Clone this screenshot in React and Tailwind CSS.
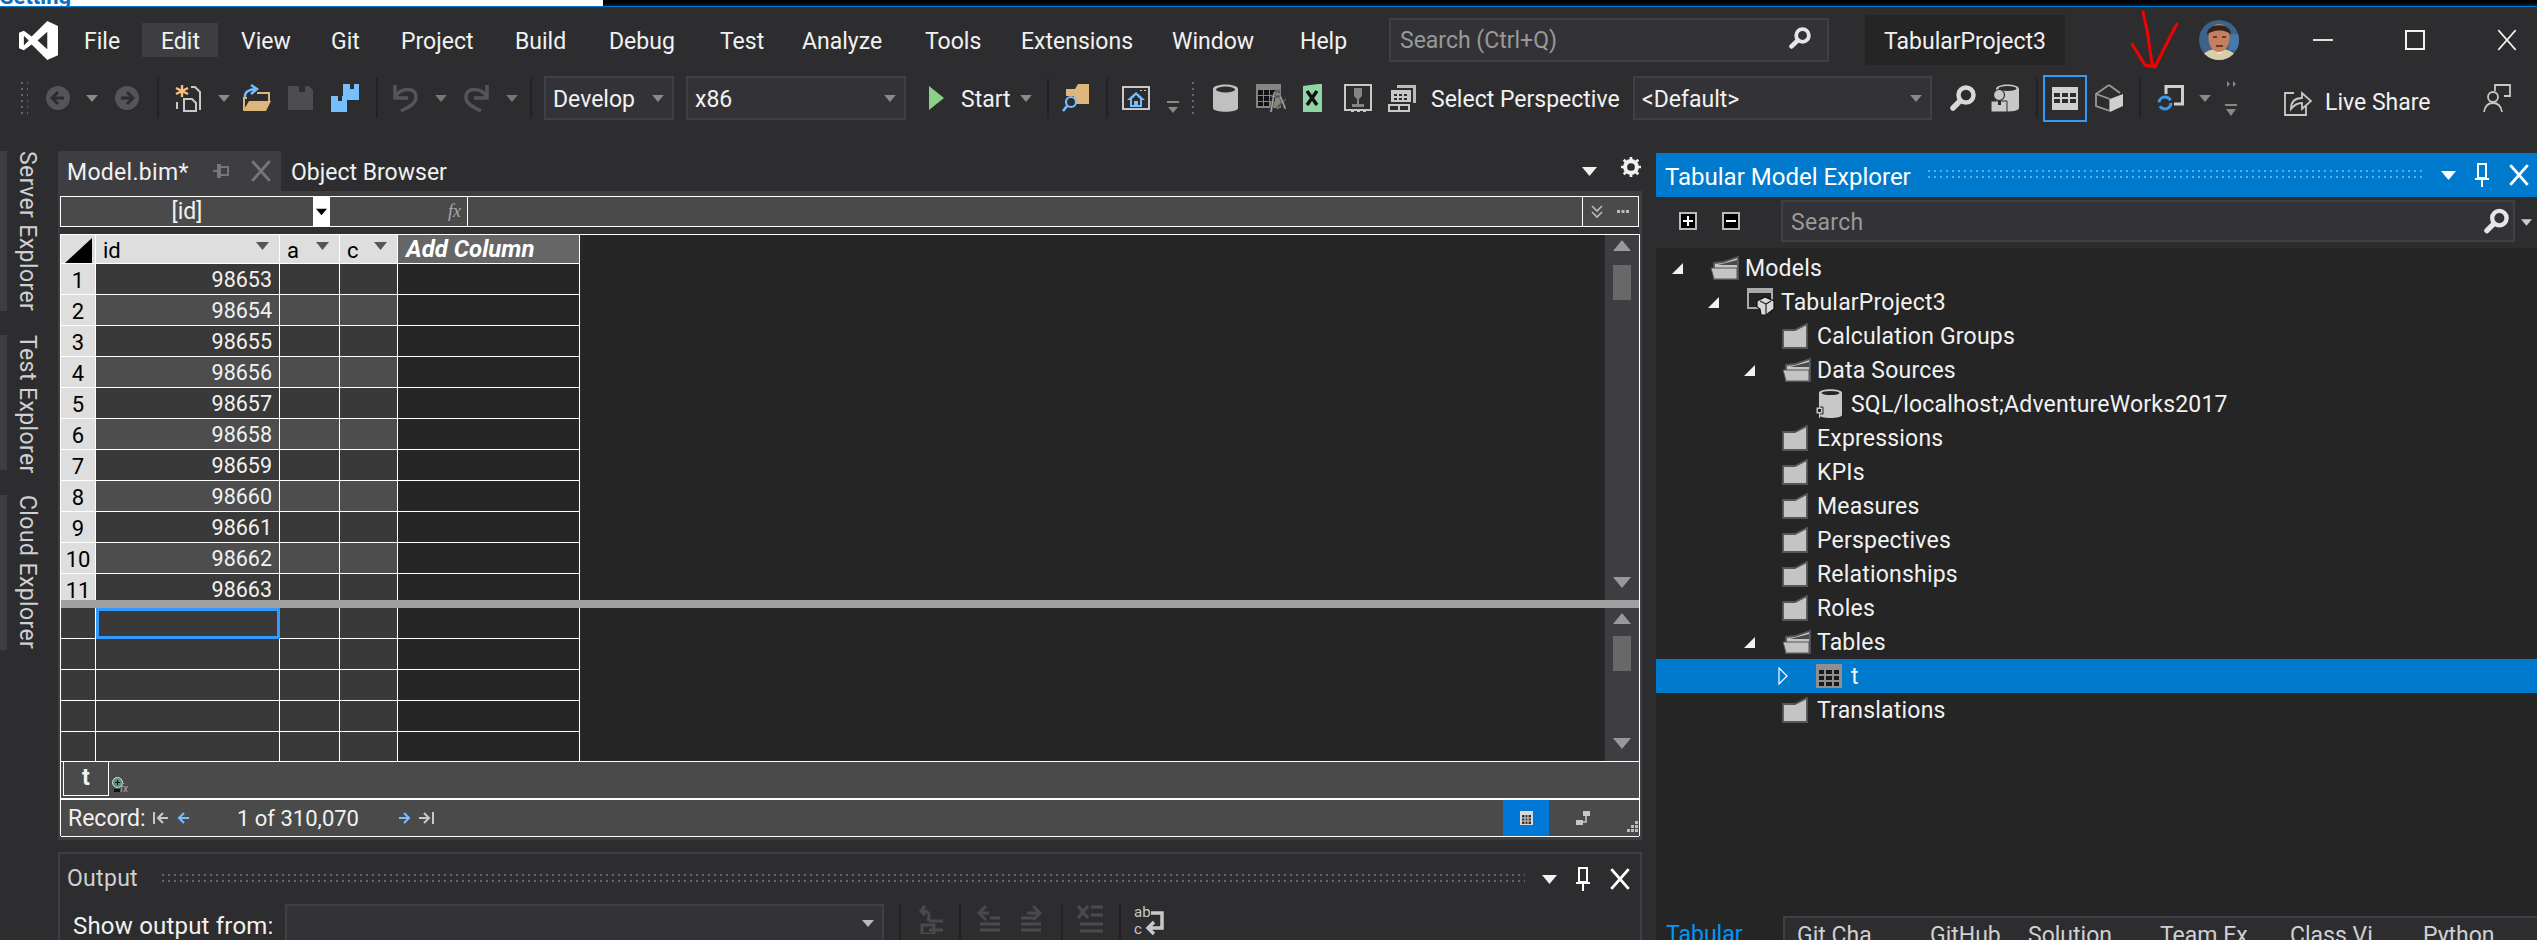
import React from "react";

const Caret = ({ c = "#8a8a8a", w = 12, h = 7, className = "" }) => (
  <svg width={w} height={h} viewBox="0 0 10 6" className={`shrink-0 ${className}`}>
    <path d="M0 0h10L5 6z" fill={c} />
  </svg>
);

const Sep = ({ className = "" }) => <div className={`w-[2px] h-[40px] bg-[#222225] shrink-0 ${className}`} />;

const Grip = ({ className = "" }) => (
  <div className={`bg-[radial-gradient(circle,#666_1px,transparent_1.3px)] bg-[length:6px_6px] ${className}`} />
);

const Combo = ({ className = "", text }) => (
  <div className={`h-[44px] shrink-0 flex items-center justify-between pl-[7px] pr-[8px] bg-[#333337] border-2 border-[#3f3f46] ${className}`}>
    <span className="whitespace-nowrap pt-[4px]">{text}</span>
    <Caret />
  </div>
);

const Overflow = ({ className = "" }) => (
  <svg width="12" height="36" viewBox="0 0 12 36" className={`shrink-0 ${className}`}>
    <path d="M2 1l3 3-3 3zM8 1l3 3-3 3z" fill="#888" />
    <path d="M0 24h12v2H0zM1 29h10l-5 7z" fill="#888" />
  </svg>
);

// toolbar drawings
const Circle = ({ dir, className = "" }) => (
  <svg width="24" height="24" viewBox="0 0 24 24" className={`shrink-0 ${className}`}>
    <circle cx="12" cy="12" r="12" fill="#555557" />
    <path d={dir === "l" ? "M12 6l-6 6 6 6M6 12h12" : "M12 6l6 6-6 6M18 12H6"} fill="none" stroke="#2d2d30" strokeWidth="3" />
  </svg>
);

const NewProject = ({ className = "" }) => (
  <svg width="27" height="28" viewBox="0 0 27 28" className={`shrink-0 ${className}`}>
    <path d="M8 1v12M2 4l12 6M14 4L2 10" stroke="#f4c27a" strokeWidth="2.400" />
    <path d="M17 3h4l5 5v18M3 18v7M10 15h8l4 4v8H10z" fill="none" stroke="#c8c8c8" strokeWidth="2" />
  </svg>
);

const OpenFolder = ({ className = "" }) => (
  <svg width="29" height="28" viewBox="0 0 29 28" className={`shrink-0 ${className}`}>
    <path d="M2 26V14h3M15 9h12v8" fill="none" stroke="#dcb67a" strokeWidth="2" />
    <path d="M1 27l6-10h22l-5 10z" fill="#dcb67a" />
    <path d="M3 14C2 8 7 5 15 5M9 1l6 4-6 5" fill="none" stroke="#75beff" strokeWidth="2.400" />
  </svg>
);

const Disk = ({ className = "" }) => (
  <svg width="25" height="24" viewBox="0 0 25 24" className={`shrink-0 ${className}`}>
    <path d="M0 0h21l4 4v20H0z" fill="#4d4d4f" />
    <path d="M11 0h6v6h-6z" fill="#2d2d30" />
  </svg>
);

const SaveAll = ({ className = "" }) => (
  <svg width="28" height="28" viewBox="0 0 28 28" className={`shrink-0 ${className}`}>
    <path d="M12 0h16v16H12z" fill="#75beff" />
    <path d="M19 0h4v5h-4z" fill="#2d2d30" />
    <path d="M0 12h16v16H0z" fill="#75beff" />
    <path d="M7 12h4v5H7z" fill="#2d2d30" />
  </svg>
);

const Undo = ({ flip, className = "" }) => (
  <svg width="26" height="27" viewBox="0 0 26 27" className={`shrink-0 ${className} ${flip ? "-scale-x-100" : ""}`}>
    <path d="M3 0v13h13M3 12C8 3 24 1 24 12c0 7-7 10-15 14" fill="none" stroke="#555557" strokeWidth="3.500" />
  </svg>
);

const Play = ({ className = "" }) => (
  <svg width="15" height="24" viewBox="0 0 15 24" className={`shrink-0 ${className}`}>
    <path d="M0 0l15 12L0 24z" fill="#89d185" />
  </svg>
);

const FolderSearch = ({ className = "" }) => (
  <svg width="28" height="28" viewBox="0 0 28 28" className={`shrink-0 ${className}`}>
    <path d="M4 5h9l3-5h11v20H12V12H4z" fill="#dcb67a" />
    <circle cx="9" cy="18" r="5" fill="#2d2d30" stroke="#75beff" strokeWidth="2.200" />
    <path d="M5 22l-4 5" stroke="#75beff" strokeWidth="2.600" />
  </svg>
);

const Home = ({ className = "" }) => (
  <svg width="28" height="24" viewBox="0 0 28 24" className={`shrink-0 ${className}`}>
    <path d="M1 1h26v22H1z" fill="none" stroke="#c8c8c8" strokeWidth="2" />
    <path d="M18 4h2v1h-2zM22 4h2v1h-2z" fill="#c8c8c8" />
    <path d="M14 6L5 14h3v7h12v-7h3z" fill="#75beff" />
    <path d="M14 9l-4 4v6h2v-4h4v4h2v-6z" fill="#2d2d30" />
  </svg>
);

const Db = ({ className = "" }) => (
  <svg width="25" height="28" viewBox="0 0 25 28" className={`shrink-0 ${className}`}>
    <path d="M0 5c0-6 25-6 25 0v19c0 5-25 5-25 0z" fill="#c0c0c0" />
    <ellipse cx="12.500" cy="5.500" rx="9.500" ry="3" fill="#2d2d30" />
  </svg>
);

const DbModel = ({ className = "" }) => (
  <svg width="28" height="28" viewBox="0 0 28 28" className={`shrink-0 ${className}`}>
    <path d="M5 5c0-6 23-6 23 0v19c0 5-23 4-23 0z" fill="#c8c8c8" />
    <ellipse cx="16.500" cy="4.500" rx="9" ry="2.500" fill="#2d2d30" />
    <circle cx="8" cy="11" r="5.500" fill="#c8c8c8" stroke="#2d2d30" strokeWidth="1.200" />
    <path d="M0 17h16v11H0z" fill="#c8c8c8" stroke="#2d2d30" strokeWidth="1" />
    <path d="M7 17h3v4H7z" fill="#2d2d30" />
  </svg>
);

const TableFx = ({ className = "" }) => (
  <svg width="30" height="28" viewBox="0 0 30 28" className={`shrink-0 ${className}`}>
    <path d="M0 0h25v24H0z" fill="#858585" />
    <path d="M2 6h5v5H2zM8 6h5v5H8zM14 6h5v5h-5zM2 12h5v5H2zM8 12h5v5H8zM14 12h5v5h-5zM2 18h5v4H2zM8 18h5v4H8z" fill="#111" />
    <text x="13" y="25" fontSize="27" fontStyle="italic" fontFamily="Liberation Serif, serif" fill="#b0b0b0" stroke="#2d2d30" strokeWidth="0.600">fx</text>
  </svg>
);

const Excel = ({ className = "" }) => (
  <svg width="19" height="28" viewBox="0 0 19 28" className={`shrink-0 ${className}`}>
    <path d="M0 2l15-2h4v28H0z" fill="#8ed6a5" />
    <path d="M4 7l10 14M14 7L4 21" stroke="#111" strokeWidth="3.500" />
  </svg>
);

const Deploy = ({ className = "" }) => (
  <svg width="28" height="28" viewBox="0 0 28 28" className={`shrink-0 ${className}`}>
    <path d="M1 1h26v25H1z" fill="none" stroke="#c8c8c8" strokeWidth="2" />
    <path d="M10 4h8v8l-3 3v5h5v3H8v-3h5v-5l-3-3z" fill="#858585" />
    <path d="M7 27h3v1H7zM13 27h3v1h-3zM19 27h3v1h-3z" fill="#c8c8c8" />
  </svg>
);

const PerspectiveIcon = ({ className = "" }) => (
  <svg width="28" height="28" viewBox="0 0 28 28" className={`shrink-0 ${className}`}>
    <path d="M9 1h19v18h-3V4H9z" fill="#bbb" />
    <path d="M3 6h20v12H3z" fill="#c8c8c8" />
    <path d="M6 10h3v2H6zM11 10h3v2h-3zM16 10h3v2h-3zM6 14h3v2H6zM11 14h3v2h-3zM16 14h3v2h-3z" fill="#2d2d30" />
    <path d="M0 20h22v8H0z" fill="#c8c8c8" />
    <path d="M2 22h8v4H2zM12 22h8v4h-8z" fill="#2d2d30" />
  </svg>
);

const Magnifier = ({ c = "#d8d8d8", className = "", w = 26, h = 26 }) => (
  <svg width={w} height={h} viewBox="0 0 26 26" className={`shrink-0 ${className}`}>
    <circle cx="16" cy="10" r="7.500" fill="none" stroke={c} strokeWidth="4.500" />
    <path d="M10 16L3 23" stroke={c} strokeWidth="5.500" strokeLinecap="round" />
  </svg>
);

const GridIcon = ({ className = "" }) => (
  <svg width="26" height="23" viewBox="0 0 26 23" className={`shrink-0 ${className}`}>
    <path d="M0 0h26v23H0z" fill="#d0d0d0" />
    <path d="M2 6h6v4H2zM10 6h6v4h-6zM18 6h6v4h-6zM2 12h6v4H2zM10 12h6v4h-6zM18 12h6v4h-6z" fill="#2d2d30" />
  </svg>
);

const CubeIcon = ({ className = "" }) => (
  <svg width="28" height="28" viewBox="0 0 28 28" className={`shrink-0 ${className}`}>
    <path d="M14 1L1 10v12l14 5M1 10l14 5M14 1l11 8M15 15v12" fill="none" stroke="#9a9a9a" strokeWidth="1.800" />
    <path d="M15 15l13-5v12l-13 6z" fill="#cfcfcf" />
  </svg>
);

const SyncIcon = ({ className = "" }) => (
  <svg width="27" height="26" viewBox="0 0 27 26" className={`shrink-0 ${className}`}>
    <path d="M9 9V1.500h16.500V19H17" fill="none" stroke="#cfcfcf" strokeWidth="3" />
    <circle cx="8" cy="18" r="6" fill="none" stroke="#3b9ae1" strokeWidth="3" strokeDasharray="15 4" />
  </svg>
);

const ShareIcon = ({ className = "" }) => (
  <svg width="28" height="28" viewBox="0 0 28 28" className={`shrink-0 ${className}`}>
    <path d="M10 5H1v22h21v-9" fill="none" stroke="#c8c8c8" strokeWidth="1.800" />
    <path d="M7 21c0-7 4-11 11-11V5l9 8-9 8v-6c-5 0-8 2-11 6z" fill="none" stroke="#c8c8c8" strokeWidth="1.800" />
  </svg>
);

const PersonIcon = ({ className = "" }) => (
  <svg width="28" height="28" viewBox="0 0 28 28" className={`shrink-0 ${className}`}>
    <circle cx="10" cy="13" r="5" fill="none" stroke="#c8c8c8" strokeWidth="1.800" />
    <path d="M1 28c1-6 4-9 9-9s8 3 9 9M12 7V1h15v11h-6" fill="none" stroke="#c8c8c8" strokeWidth="1.800" />
  </svg>
);

const VsLogo = () => (
  <svg width="39" height="39" viewBox="0 0 40 40" className="shrink-0">
    <path
      fillRule="evenodd"
      d="M29 0l11 5v30l-11 5-16-16-8 6-5-2V12l5-2 8 6zM5 15v10l5-5zM29 11l-10 9 10 9z"
      fill="#fff"
    />
  </svg>
);

const Avatar = () => (
  <svg width="40" height="40" viewBox="0 0 40 40" className="shrink-0">
    <defs>
      <clipPath id="av">
        <circle cx="20" cy="20" r="20" />
      </clipPath>
    </defs>
    <g clipPath="url(#av)">
      <path d="M0 0h40v40H0z" fill="#3e6288" />
      <path d="M30 14h10v16H30z" fill="#4a78a8" />
      <path d="M2 40c1-8 9-11 18-11s17 3 18 11z" fill="#d8cfa8" />
      <path d="M15 30h11l-5 4z" fill="#f1ead2" />
      <ellipse cx="20" cy="18" rx="10.500" ry="14" fill="#c47f5e" />
      <path d="M8 15C7 2 33 2 32 15c-4-6-19-6-24 0z" fill="#33231a" />
      <path d="M14 17h4M23 17h4M17 26h7" stroke="#4a2417" strokeWidth="1.300" />
    </g>
  </svg>
);

const FolderIcon = ({ open }) =>
  open ? (
    <svg width="31" height="26" viewBox="0 0 31 26">
      <path d="M4 8l9-1 15-5v22H4z" fill="#c4c4c4" stroke="#555" strokeWidth="1.800" />
      <path d="M8 10l19-5v5z" fill="#4a4a4a" />
      <path d="M1 13h26v11H4z" fill="#c4c4c4" stroke="#555" strokeWidth="1" />
    </svg>
  ) : (
    <svg width="27" height="26" viewBox="0 0 27 26">
      <path d="M1 7h12l12-6v24H1z" fill="#c4c4c4" stroke="#555" strokeWidth="1.800" />
    </svg>
  );

const ProjectIcon = () => (
  <svg width="30" height="30" viewBox="0 0 30 30">
    <path d="M2 2h24v19H2z" fill="none" stroke="#aaa" strokeWidth="2" />
    <path d="M2 2h24v4H2z" fill="#aaa" />
    <path d="M11 14l8-4 9 4v8l-8 6h-5l-1-6-3-2z" fill="#d8d8d8" stroke="#111" strokeWidth="1.200" />
    <path d="M14 14l6 3 5-3M20 17v10" fill="none" stroke="#222" strokeWidth="1.200" />
  </svg>
);

const DbSmall = () => (
  <svg width="28" height="30" viewBox="0 0 28 30">
    <path d="M3 4c0-5 23-5 23 0v22c0 4-23 4-23 0z" fill="#c8c8c8" />
    <ellipse cx="14.500" cy="4" rx="9" ry="2" fill="#252526" />
    <path d="M0 18h7v7H0z" fill="#c8c8c8" stroke="#252526" />
    <path d="M3.500 15v14" stroke="#c8c8c8" />
    <path d="M2 20h3v3H2z" fill="#252526" />
  </svg>
);

const TreeTable = () => (
  <svg width="26" height="24" viewBox="0 0 26 24">
    <path d="M0 0h26v24H0z" fill="#8f8f8f" />
    <path d="M3 6h5v4H3zM10 6h6v4h-6zM18 6h5v4h-5zM3 12h5v4H3zM10 12h6v4h-6zM18 12h5v4h-5zM3 18h5v4H3zM10 18h6v4h-6zM18 18h5v4h-5z" fill="#1a1a1a" />
  </svg>
);

const Pin = ({ c = "#fff", className = "" }) => (
  <svg width="14" height="24" viewBox="0 0 14 24" className={`shrink-0 ${className}`}>
    <path d="M3 1h8v14H3z" fill="none" stroke={c} strokeWidth="2" />
    <path d="M0 15h14v2H0zM6 17h2v7H6z" fill={c} />
  </svg>
);

const CloseX = ({ c = "#fff", s = 17, w = 2.5, className = "" }) => (
  <svg width={s} height={s + 2} viewBox="0 0 17 19" className={`shrink-0 ${className}`}>
    <path d="M1 1l15 17M16 1L1 18" stroke={c} strokeWidth={w} />
  </svg>
);

const menu = [
  { label: "File", cls: "w-[77px]" },
  { label: "Edit", cls: "w-[76px] mr-[4px] bg-[#3e3e40]" },
  { label: "View", cls: "w-[90px]" },
  { label: "Git", cls: "w-[70px]" },
  { label: "Project", cls: "w-[114px]" },
  { label: "Build", cls: "w-[94px]" },
  { label: "Debug", cls: "w-[111px]" },
  { label: "Test", cls: "w-[82px]" },
  { label: "Analyze", cls: "w-[123px]" },
  { label: "Tools", cls: "w-[96px]" },
  { label: "Extensions", cls: "w-[151px]" },
  { label: "Window", cls: "w-[128px]" },
  { label: "Help", cls: "w-[108px]" },
];

const rowNums = [98653, 98654, 98655, 98656, 98657, 98658, 98659, 98660, 98661, 98662, 98663];

const tree = [
  { label: "Models", pad: "pl-[19px]", arrow: "down", icon: <FolderIcon open /> },
  { label: "TabularProject3", pad: "pl-[55px]", arrow: "down", icon: <ProjectIcon /> },
  { label: "Calculation Groups", pad: "pl-[91px]", icon: <FolderIcon /> },
  { label: "Data Sources", pad: "pl-[91px]", arrow: "down", icon: <FolderIcon open /> },
  { label: "SQL/localhost;AdventureWorks2017", pad: "pl-[125px]", icon: <DbSmall /> },
  { label: "Expressions", pad: "pl-[91px]", icon: <FolderIcon /> },
  { label: "KPIs", pad: "pl-[91px]", icon: <FolderIcon /> },
  { label: "Measures", pad: "pl-[91px]", icon: <FolderIcon /> },
  { label: "Perspectives", pad: "pl-[91px]", icon: <FolderIcon /> },
  { label: "Relationships", pad: "pl-[91px]", icon: <FolderIcon /> },
  { label: "Roles", pad: "pl-[91px]", icon: <FolderIcon /> },
  { label: "Tables", pad: "pl-[91px]", arrow: "down", icon: <FolderIcon open /> },
  { label: "t", pad: "pl-[125px]", arrow: "right", icon: <TreeTable />, selected: true },
  { label: "Translations", pad: "pl-[91px]", icon: <FolderIcon /> },
];

const TreeRow = ({ item }) => (
  <div className={`h-[34px] flex items-center text-[23px] tracking-[0.2px] leading-none ${item.pad} ${item.selected ? "bg-[#007acc]" : ""}`}>
    <div className="w-[35px] shrink-0 -ml-[3px] mr-[3px]">
      {item.arrow === "down" && (
        <svg width="11" height="11" viewBox="0 0 11 11">
          <path d="M11 0v11H0z" fill="#f1f1f1" />
        </svg>
      )}
      {item.arrow === "right" && (
        <svg width="10" height="18" viewBox="0 0 10 18">
          <path d="M1 1l8 8-8 8z" fill="none" stroke="#fff" strokeWidth="1.200" />
        </svg>
      )}
    </div>
    <div className="w-[35px] shrink-0 flex items-center">{item.icon}</div>
    <span className="whitespace-nowrap text-[#f1f1f1]">{item.label}</span>
  </div>
);

const gridCols = "grid grid-cols-[35px_184px_60px_58px_182px] w-[519px] shrink-0";

const HeadCell = ({ label, className = "" }) => (
  <div className={`flex items-center justify-between bg-[#dedede] text-black border-r border-white pl-[7px] pr-[10px] text-[22px] ${className}`}>
    <span className="pt-[2px]">{label}</span>
    <Caret c="#555" w={13} h={8} className="-mt-[6px]" />
  </div>
);

const ScrollBar = ({ thumb, bottom }) => (
  <div className="w-[34px] shrink-0 bg-[#3e3e42] flex flex-col items-center justify-between">
    <div className="flex flex-col items-center w-full">
      <svg width="18" height="11" viewBox="0 0 18 11" className="mt-[5px]">
        <path d="M9 0l9 11H0z" fill="#999" />
      </svg>
      <div className={`w-[18px] h-[35px] bg-[#686868] ${thumb}`} />
    </div>
    <svg width="18" height="11" viewBox="0 0 18 11" className={bottom}>
      <path d="M0 0h18L9 11z" fill="#999" />
    </svg>
  </div>
);

const SideTab = ({ label, className = "" }) => (
  <div className={`flex ${className}`}>
    <div className="w-[7px] bg-[#3e3e42]" />
    <div className="[writing-mode:vertical-rl] pl-[4px] text-[23px] leading-[32px] text-[#d0d0d0] tracking-[0.4px] whitespace-nowrap">{label}</div>
  </div>
);

export default function App() {
  return (
    <div className="w-[2537px] h-[940px] overflow-hidden flex flex-col bg-[#2d2d30] text-[#f1f1f1] text-[23px] font-['Roboto',sans-serif]">
      {/* window behind */}
      <div className="h-[6px] flex shrink-0 overflow-hidden">
        <div className="w-[603px] bg-white overflow-hidden text-[#0a6fc2] font-bold text-[22px] leading-[22px]">
          <div className="-mt-[14px]">Setting</div>
        </div>
        <div className="flex-1 bg-linear-to-b from-black to-[#03243c]" />
      </div>
      <div className="h-[1px] shrink-0 bg-[#007acc]" />

      {/* title bar + menu */}
      <div className="h-[66px] shrink-0 flex items-center pl-[19px]">
        <VsLogo />
        <div className="flex items-center ml-[7px]">
          {menu.map((m) => (
            <span key={m.label} className={`h-[34px] leading-[37px] pl-[19px] ${m.cls}`}>
              {m.label}
            </span>
          ))}
        </div>
        <div className="w-[440px] h-[44px] flex items-center justify-between px-[9px] pr-[16px] bg-[#333337] border-2 border-[#3f3f46] text-[#999]">
          <span className="pt-[3px]">Search (Ctrl+Q)</span>
          <Magnifier w={22} h={22} c="#e6e6e6" className="-mt-[4px]" />
        </div>
        <div className="w-[200px] h-[50px] ml-[36px] pt-[5px] flex items-center justify-center bg-[#252526]">TabularProject3</div>
        <svg width="50" height="60" viewBox="0 0 50 60" className="ml-[66px] shrink-0">
          <path
            d="M12 2l4 18 5 33 3 4M1 34l13 21 10 2 7-14 8-16 7-13"
            fill="none"
            stroke="#f40000"
            strokeWidth="3"
            strokeLinejoin="round"
            strokeLinecap="round"
          />
        </svg>
        <div className="ml-[18px]">
          <Avatar />
        </div>
        <div className="w-[20px] h-[2px] bg-[#e0e0e0] ml-[74px]" />
        <div className="w-[20px] h-[20px] border-2 border-[#f1f1f1] ml-[72px]" />
        <CloseX c="#f1f1f1" s={20} w={1.4} className="ml-[72px]" />
      </div>

      {/* toolbar */}
      <div className="h-[50px] shrink-0 flex items-center pl-[19px]">
        <Grip className="w-[9px] h-[36px] shrink-0" />
        <Circle dir="l" className="ml-[18px]" />
        <Caret className="ml-[16px]" />
        <Circle dir="r" className="ml-[17px]" />
        <Sep className="ml-[18px]" />
        <NewProject className="ml-[15px]" />
        <Caret className="ml-[17px]" />
        <OpenFolder className="ml-[12px]" />
        <Disk className="ml-[17px]" />
        <SaveAll className="ml-[18px]" />
        <Sep className="ml-[17px]" />
        <Undo className="ml-[14px]" />
        <Caret c="#777" className="ml-[17px]" />
        <Undo flip className="ml-[17px]" />
        <Caret c="#777" className="ml-[16px]" />
        <Sep className="ml-[12px]" />
        <Combo text="Develop" className="w-[130px] ml-[12px]" />
        <Combo text="x86" className="w-[220px] ml-[12px]" />
        <Play className="ml-[23px]" />
        <span className="w-[47px] ml-[17px] pt-[4px] shrink-0">Start</span>
        <Caret className="ml-[12px]" />
        <Sep className="ml-[15px]" />
        <FolderSearch className="ml-[13px]" />
        <Sep className="ml-[16px]" />
        <Home className="ml-[14px]" />
        <svg width="12" height="12" viewBox="0 0 12 12" className="ml-[17px] mt-[18px] shrink-0">
          <path d="M0 0h12v2H0zM1 6h10l-5 6z" fill="#888" />
        </svg>
        <Grip className="w-[8px] h-[36px] shrink-0 ml-[11px]" />
        <Db className="ml-[15px]" />
        <TableFx className="ml-[18px]" />
        <Excel className="ml-[17px]" />
        <Deploy className="ml-[22px]" />
        <PerspectiveIcon className="ml-[16px]" />
        <span className="w-[189px] ml-[15px] pt-[4px] shrink-0 whitespace-nowrap">Select Perspective</span>
        <Combo text="<Default>" className="w-[299px] ml-[13px]" />
        <Magnifier className="ml-[18px]" />
        <DbModel className="ml-[15px]" />
        <Sep className="ml-[17px]" />
        <div className="w-[44px] h-[47px] ml-[5px] shrink-0 flex items-center justify-center border-2 border-[#3399ff]">
          <GridIcon />
        </div>
        <CubeIcon className="ml-[8px]" />
        <Sep className="ml-[16px]" />
        <SyncIcon className="ml-[16px]" />
        <Caret className="ml-[15px]" />
        <Overflow className="ml-[14px]" />
        <ShareIcon className="ml-[47px] mt-[7px]" />
        <span className="w-[108px] ml-[13px] pt-[10px] shrink-0 whitespace-nowrap">Live Share</span>
        <PersonIcon className="ml-[50px]" />
      </div>

      <div className="h-[28px] shrink-0" />

      {/* main */}
      <div className="flex-1 min-h-0 flex">
        <div className="w-[58px] shrink-0 flex flex-col">
          <SideTab label="Server Explorer" className="h-[160px] mb-[24px]" />
          <SideTab label="Test Explorer" className="h-[135px] mb-[25px]" />
          <SideTab label="Cloud Explorer" className="h-[155px]" />
        </div>

        {/* documents */}
        <div className="w-[1584px] shrink-0 flex flex-col">
          <div className="h-[40px] shrink-0 flex items-center">
            <div className="w-[223px] h-full bg-[#3e3e42] flex items-center pl-[9px] pr-[12px]">
              <span className="w-[146px] shrink-0 pt-[4px] tracking-[0.3px]">Model.bim*</span>
              <svg width="18" height="14" viewBox="0 0 18 14" className="shrink-0">
                <path d="M0 7h5M5 1h2v12H5zM7 3h8v8H7z" fill="none" stroke="#777" strokeWidth="2" />
              </svg>
              <CloseX c="#777" s={20} className="ml-[20px]" />
            </div>
            <span className="ml-[10px] w-[161px] pt-[4px] whitespace-nowrap">Object Browser</span>
            <Caret c="#f1f1f1" w={15} h={9} className="ml-[1130px]" />
            <svg width="20" height="20" viewBox="0 0 22 22" className="ml-[24px] -mt-[8px] shrink-0">
              <circle cx="11" cy="11" r="6.500" fill="none" stroke="#f1f1f1" strokeWidth="4.500" />
              <path d="M11 0v5M11 17v5M0 11h5M17 11h5M3 3l3 3M16 16l3 3M3 19l3-3M16 6l3-3" stroke="#f1f1f1" strokeWidth="3" />
            </svg>
          </div>

          <div className="w-full h-[649px] shrink-0 flex flex-col bg-[#3e3e42] pt-[5px] pb-[4px] pl-[2px] pr-[3px]">
            {/* formula bar */}
            <div className="h-[31px] shrink-0 flex items-stretch border border-white bg-[#4a4a4a] text-[23px]">
              <div className="w-[252px] flex items-center justify-center pt-[2px]">[id]</div>
              <div className="w-[17px] bg-white flex items-center justify-center">
                <Caret c="#000" w={11} h={8} />
              </div>
              <div className="w-[138px] border-r border-white flex items-center justify-end pr-[6px] text-[#aaa] italic font-['Liberation_Serif',serif] text-[18px]">
                fx
              </div>
              <div className="flex-1" />
              <div className="w-[56px] border-l border-white flex items-center justify-between pl-[8px] pr-[9px]">
                <svg width="12" height="14" viewBox="0 0 12 14">
                  <path d="M1 1l5 5 5-5M1 7l5 5 5-5" fill="none" stroke="#bbb" strokeWidth="1.600" />
                </svg>
                <svg width="12" height="3" viewBox="0 0 12 3">
                  <path d="M0 0h3v3H0zM4.500 0h3v3h-3zM9 0h3v3H9z" fill="#bbb" />
                </svg>
              </div>
            </div>
            <div className="h-[7px] shrink-0 bg-[#303032]" />

            <div className="flex-1 min-h-0 flex flex-col border-x border-white bg-[#262626] -mr-[1px]">
              {/* upper pane */}
              <div className="h-[366px] shrink-0 flex overflow-hidden border-t border-white">
                <div className={`${gridCols} content-start`}>
                  <div className="h-[29px] bg-[#dedede] border-r border-b border-white flex items-end pl-[4px]">
                    <svg width="27" height="25" viewBox="0 0 27 25">
                      <path d="M27 0v25H0z" fill="#000" />
                    </svg>
                  </div>
                  <HeadCell label="id" className="h-[29px] border-b" />
                  <HeadCell label="a" className="h-[29px] border-b" />
                  <HeadCell label="c" className="h-[29px] border-b" />
                  <div className="h-[29px] bg-[#666] border-r border-b border-white pl-[8px] font-bold italic text-[24px] leading-[29px] text-white whitespace-nowrap">
                    Add Column
                  </div>
                  {rowNums.map((n, i) => (
                    <React.Fragment key={n}>
                      <div className="h-[31px] bg-[#dedede] text-black border-r border-b border-white flex items-center justify-center pt-[2px] text-[22px]">
                        {i + 1}
                      </div>
                      <div className={`h-[31px] border-r border-b border-white flex items-center justify-end pt-[2px] pr-[7px] text-[21.500px] ${i % 2 ? "bg-[#4d4d4d]" : "bg-[#393939]"}`}>
                        {n}
                      </div>
                      <div className={`h-[31px] border-r border-b border-white ${i % 2 ? "bg-[#4d4d4d]" : "bg-[#393939]"}`} />
                      <div className={`h-[31px] border-r border-b border-white ${i % 2 ? "bg-[#4d4d4d]" : "bg-[#393939]"}`} />
                      <div className="h-[31px] border-r border-b border-white bg-[#262626]" />
                    </React.Fragment>
                  ))}
                </div>
                <div className="flex-1" />
                <ScrollBar thumb="mt-[14px]" bottom="mb-[12px]" />
              </div>

              <div className="h-[8px] shrink-0 bg-[#a0a0a0]" />

              {/* lower pane */}
              <div className="h-[153px] shrink-0 flex overflow-hidden">
                <div className={`${gridCols} content-start`}>
                  {[0, 1, 2, 3, 4].map((r) => (
                    <React.Fragment key={r}>
                      <div className="h-[31px] bg-[#393939] border-r border-b border-white" />
                      <div className={`h-[31px] bg-[#393939] ${r === 0 ? "border-[3px] border-[#3399ff]" : "border-r border-b border-white"}`} />
                      <div className="h-[31px] bg-[#393939] border-r border-b border-white" />
                      <div className="h-[31px] bg-[#393939] border-r border-b border-white" />
                      <div className="h-[31px] bg-[#262626] border-r border-b border-white" />
                    </React.Fragment>
                  ))}
                </div>
                <div className="flex-1" />
                <ScrollBar thumb="mt-[12px]" bottom="mb-[12px]" />
              </div>

              {/* sheet tabs */}
              <div className="h-[39px] shrink-0 flex items-start bg-[#4a4a4a] border-t border-b-[2px] border-white">
                <div className="w-[46px] h-[34px] ml-[2px] border-x border-b border-white flex items-center justify-center font-bold text-[23px]">t</div>
                <svg width="16" height="16" viewBox="0 0 16 16" className="ml-[3px] mt-[15px]">
                  <circle cx="5.500" cy="5.500" r="5" fill="#5a8f78" stroke="#ddd" />
                  <path d="M3 5.500h5M5.500 3v5" stroke="#111" />
                  <path d="M2 12h6v3H2z" fill="#111" />
                  <text x="8" y="15" fontSize="10" fontStyle="italic" fill="#aaa">fx</text>
                </svg>
              </div>

              {/* record bar */}
              <div className="h-[37px] shrink-0 flex items-center bg-[#4a4a4a] border-b border-white text-[23px]">
                <span className="w-[92px] pl-[7px] pt-[2px] shrink-0 whitespace-nowrap">Record:</span>
                <svg width="16" height="12" viewBox="0 0 16 12" className="shrink-0">
                  <path d="M1 0v12M15 6H5M10 1L5 6l5 5" fill="none" stroke="#c8c8c8" strokeWidth="2" />
                </svg>
                <svg width="12" height="12" viewBox="0 0 12 12" className="ml-[8px] shrink-0">
                  <path d="M12 6H2M7 1L2 6l5 5" fill="none" stroke="#75beff" strokeWidth="2" />
                </svg>
                <span className="w-[114px] ml-[48px] shrink-0 whitespace-nowrap text-[22px]">1 of 310,070</span>
                <svg width="12" height="12" viewBox="0 0 12 12" className="ml-[48px] shrink-0">
                  <path d="M0 6h10M5 1l5 5-5 5" fill="none" stroke="#75beff" strokeWidth="2" />
                </svg>
                <svg width="16" height="12" viewBox="0 0 16 12" className="ml-[7px] shrink-0">
                  <path d="M15 0v12M1 6h10M6 1l5 5-5 5" fill="none" stroke="#c8c8c8" strokeWidth="2" />
                </svg>
                <div className="w-[46px] h-full ml-[1069px] shrink-0 bg-[#0078d7] flex items-center justify-center">
                  <svg width="13" height="14" viewBox="0 0 13 14">
                    <path d="M0 0h13v14H0z" fill="#d8d8d8" />
                    <path d="M2 4h9v9H2z" fill="#333" />
                    <path d="M5 4v9M8 4v9M2 7h9M2 10h9" stroke="#d8d8d8" />
                  </svg>
                </div>
                <svg width="14" height="14" viewBox="0 0 14 14" className="ml-[27px] shrink-0">
                  <path d="M7 0h7v5H7zM0 9h7v5H0z" fill="#c8c8c8" />
                  <path d="M10 5v6H7" fill="none" stroke="#c8c8c8" strokeWidth="1.500" />
                </svg>
                <svg width="12" height="12" viewBox="0 0 12 12" className="ml-[36px] mt-[18px] shrink-0">
                  <path d="M9 0h3v3H9zM5 4h3v3H5zM9 4h3v3H9zM1 8h3v3H1zM5 8h3v3H5zM9 8h3v3H9z" fill="#bbb" />
                </svg>
              </div>
            </div>
          </div>

          <div className="h-[12px] shrink-0" />

          {/* output */}
          <div className="flex-1 min-h-0 border-2 border-[#3f3f46] border-b-0 overflow-hidden flex flex-col">
            <div className="h-[50px] shrink-0 flex items-center pl-[7px]">
              <span className="w-[91px] shrink-0 text-[#d0d0d0] tracking-[0.3px]">Output</span>
              <Grip className="w-[1365px] h-[14px] shrink-0 ml-[2px]" />
              <Caret c="#f1f1f1" w={15} h={9} className="ml-[17px]" />
              <Pin className="ml-[19px]" />
              <CloseX s={20} className="ml-[20px]" />
            </div>
            <div className="flex items-start pl-[13px] h-[36px]">
              <span className="w-[212px] shrink-0 mt-[4px] whitespace-nowrap text-[24px] tracking-[0.2px]">Show output from:</span>
              <div className="w-[599px] h-[36px] shrink-0 flex items-center justify-end pr-[8px] bg-[#333337] border-2 border-b-0 border-[#3f3f46]">
                <Caret c="#bbb" w={12} h={9} />
              </div>
              <Sep className="ml-[15px] !h-[36px]" />
              <svg width="26" height="30" viewBox="0 0 26 30" className="ml-[16px] shrink-0">
                <path d="M8 2L4 7l4 4M5 7c8-1 8 5 6 10M12 17h14M5 21h12v9H5zM12 26h14" fill="none" stroke="#4a4a4c" strokeWidth="3" />
              </svg>
              <Sep className="ml-[16px] !h-[36px]" />
              <svg width="24" height="30" viewBox="0 0 24 30" className="ml-[15px] shrink-0">
                <path d="M10 2L3 9l7 7M3 9h10M14 14h10M4 20h20M4 26h20" fill="none" stroke="#4a4a4c" strokeWidth="3" />
              </svg>
              <svg width="24" height="30" viewBox="0 0 24 30" className="ml-[19px] shrink-0">
                <path d="M14 2l7 7-7 7M21 9H8M2 14h12M2 20h20M2 26h20" fill="none" stroke="#4a4a4c" strokeWidth="3" />
              </svg>
              <Sep className="ml-[18px] !h-[36px]" />
              <svg width="26" height="30" viewBox="0 0 26 30" className="ml-[14px] shrink-0">
                <path d="M1 2l10 12M11 2L1 14M14 3h12M14 11h12M3 20h23M3 27h23" fill="none" stroke="#4a4a4c" strokeWidth="3" />
              </svg>
              <Sep className="ml-[16px] !h-[36px]" />
              <svg width="30" height="32" viewBox="0 0 30 32" className="ml-[13px] shrink-0">
                <text x="0" y="13" fontSize="15" fontFamily="Roboto, sans-serif" fill="#c8c8c8">ab</text>
                <text x="0" y="30" fontSize="15" fontFamily="Roboto, sans-serif" fill="#c8c8c8">c</text>
                <path d="M17 9h11v15H14M20 18l-6 6 6 6" fill="none" stroke="#c8c8c8" strokeWidth="3.500" />
              </svg>
            </div>
          </div>
        </div>

        {/* right panel */}
        <div className="w-[881px] shrink-0 ml-[14px] mt-[2px] flex flex-col bg-[#252526]">
          <div className="h-[44px] shrink-0 bg-[#007acc] flex items-center pl-[9px] text-white">
            <span className="w-[244px] shrink-0 whitespace-nowrap pt-[4px] text-[24px]">Tabular Model Explorer</span>
            <div className="w-[498px] h-[14px] ml-[17px] shrink-0 bg-[radial-gradient(circle,#5ab0e4_1px,transparent_1.3px)] bg-[length:6px_6px]" />
            <Caret c="#fff" w={15} h={9} className="ml-[17px]" />
            <Pin className="ml-[19px]" />
            <CloseX s={20} className="ml-[20px]" />
          </div>
          <div className="h-[51px] shrink-0 bg-[#2d2d30] flex items-center pl-[23px]">
            <div className="w-[18px] h-[18px] -mt-[4px] shrink-0 bg-black border-2 border-[#bbb] flex items-center justify-center">
              <svg width="10" height="10" viewBox="0 0 10 10">
                <path d="M4 0h2v4h4v2H6v4H4V6H0V4h4z" fill="#fff" />
              </svg>
            </div>
            <div className="w-[18px] h-[18px] ml-[25px] -mt-[4px] shrink-0 bg-black border-2 border-[#bbb] flex items-center justify-center">
              <div className="w-[10px] h-[2px] bg-white" />
            </div>
            <div className="w-[734px] h-[42px] ml-[41px] -mt-[3px] shrink-0 bg-[#333337] border-2 border-[#3f3f46] flex items-center justify-between pl-[8px] pr-[4px] text-[#999]">
              <span className="pt-[4px] tracking-[0.3px]">Search</span>
              <Magnifier c="#e6e6e6" w={25} h={26} />
            </div>
            <Caret c="#ccc" w={11} h={7} className="ml-[6px]" />
          </div>
          <div className="flex-1 min-h-0 pt-[3px] overflow-hidden">
            {tree.map((t) => (
              <TreeRow key={t.label} item={t} />
            ))}
          </div>
          <div className="h-[24px] shrink-0 flex overflow-hidden">
            <div className="w-[127px] shrink-0 pl-[10px] text-[#0097fb] leading-[38px]">Tabular</div>
            <div className="flex-1 flex bg-[#2d2d30] border-t-2 border-l-2 border-[#3f3f46] text-[#d0d0d0] leading-[36px]">
              <span className="w-[133px] pl-[12px]">Git Cha</span>
              <span className="w-[98px] pl-[12px]">GitHub</span>
              <span className="w-[132px] pl-[12px]">Solution</span>
              <span className="w-[130px] pl-[12px]">Team Ex</span>
              <span className="w-[133px] pl-[12px]">Class Vi</span>
              <span className="pl-[12px]">Python</span>
            </div>
          </div>
        </div>
      </div>
    </div>
  );
}
